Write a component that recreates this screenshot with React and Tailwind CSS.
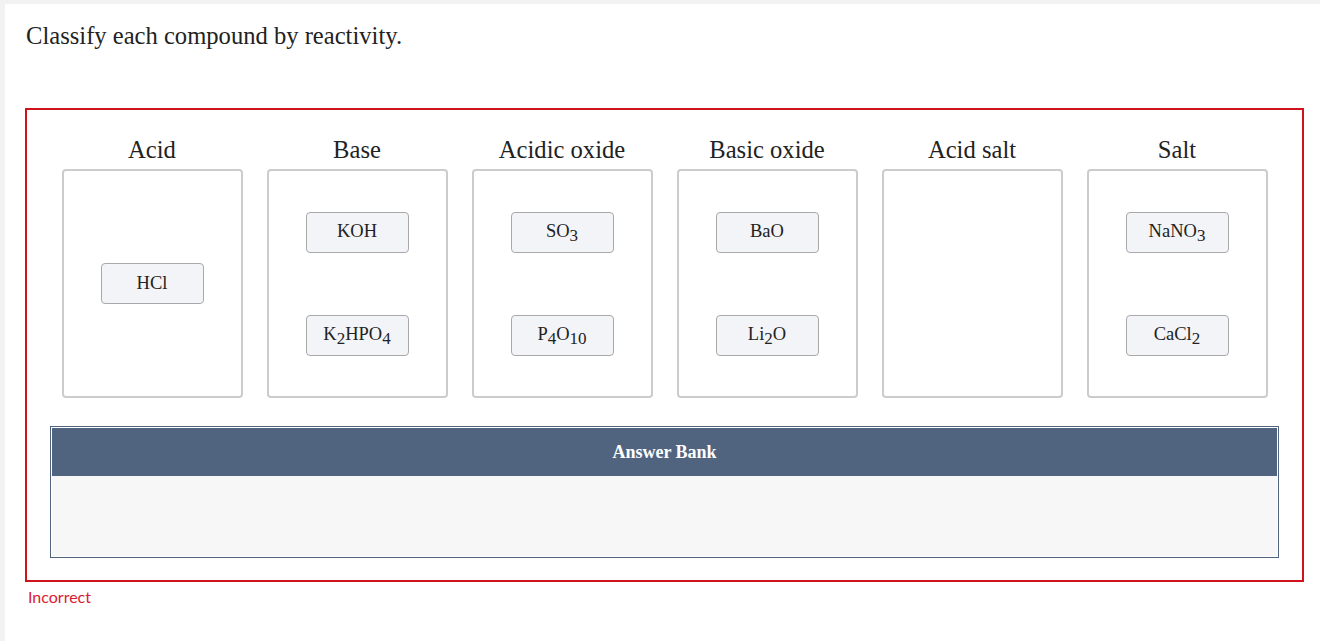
import React from 'react';

const serif = { fontFamily: '"Liberation Serif", "Times New Roman", serif' };

const columnas = [
  { titulo: 'Acid', itens: [['HCl']] },
  { titulo: 'Base', itens: [['KOH'], ['K', '2', 'HPO', '4']] },
  { titulo: 'Acidic oxide', itens: [['SO', '3'], ['P', '4', 'O', '10']] },
  { titulo: 'Basic oxide', itens: [['BaO'], ['Li', '2', 'O']] },
  { titulo: 'Acid salt', itens: [] },
  { titulo: 'Salt', itens: [['NaNO', '3'], ['CaCl', '2']] },
];

// alterna texto normal e subscrito
const Formula = ({ partes }) => (
  <span>
    {partes.map((p, i) =>
      i % 2 === 1 ? (
        <sub key={i} className="text-[17px]">
          {p}
        </sub>
      ) : (
        <span key={i}>{p}</span>
      )
    )}
  </span>
);

const App = () => {
  return (
    <div className="min-h-[641px] bg-[#f2f2f2] pt-[4px] pl-[5px]" style={serif}>
      <div className="bg-white min-h-[637px] pl-[20px] pr-[16px] pt-[18px]">
        <h1 className="text-[24.6px] leading-[28px] text-[#222] pl-[1px]">
          Classify each compound by reactivity.
        </h1>

        <div className="mt-[58px] border-2 border-[#d0121c] pt-[26px] pb-[22px]">
          <div className="grid grid-cols-[repeat(6,181px)] gap-x-[24px] justify-center">
            {columnas.map((col) => (
              <div key={col.titulo} className="flex flex-col">
                <div className="text-[24.6px] leading-[28px] text-center text-[#222] mb-[5px]">
                  {col.titulo}
                </div>
                <div className="h-[229px] border-2 border-[#cccccc] rounded-[4px] flex flex-col items-center justify-center gap-[62px]">
                  {col.itens.map((item, i) => (
                    <div
                      key={i}
                      className="w-[103px] h-[41px] bg-[#f3f4f8] border border-[#a9a9a9] rounded-[4px] flex items-center justify-center text-[18.5px] text-[#222]"
                    >
                      <Formula partes={item} />
                    </div>
                  ))}
                </div>
              </div>
            ))}
          </div>

          <div className="mx-[23px] mt-[28px] border border-[#506480] p-[1px] h-[132px] flex flex-col">
            <div className="h-[48px] bg-[#506480] text-white font-bold text-[18px] flex items-center justify-center">
              Answer Bank
            </div>
            <div className="flex-1 bg-[#f7f7f7]"></div>
          </div>
        </div>

        <div
          className="mt-[3px] pl-[3px] text-[16px] text-[#d9202e]"
          style={{ fontFamily: 'Lato, "Open Sans", sans-serif' }}
        >
          Incorrect
        </div>
      </div>
    </div>
  );
};

export default App;
